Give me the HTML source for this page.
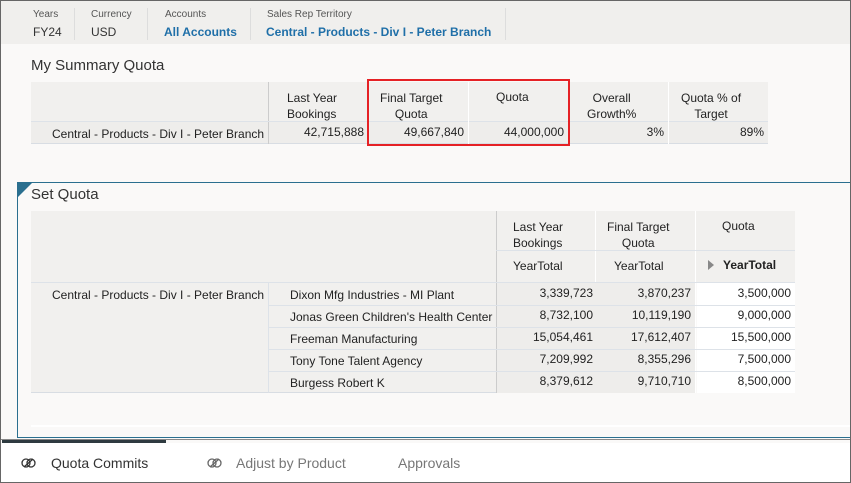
<!DOCTYPE html>
<html><head><style>
*{margin:0;padding:0;box-sizing:border-box}
body{width:851px;height:483px;overflow:hidden;font-family:"Liberation Sans",sans-serif;background:#faf9f8;position:relative;color:#222}
.a{position:absolute}
.frame{left:0;top:0;width:851px;height:483px;border:1px solid #666;z-index:9;pointer-events:none}
.lbl{font-size:10px;color:#555}
.val{font-size:12px;color:#333}
.blue{font-size:12px;font-weight:bold;color:#1f6fa8}
.c{font-size:12px;color:#222}
.num{text-align:right}
</style></head><body>
<div class="a frame"></div>
<div class="a" style="left:0;top:0;width:851px;height:44px;background:#f0efed"></div>
<div class="a lbl" style="left:33px;top:9px">Years</div>
<div class="a val" style="left:33px;top:25px">FY24</div>
<div class="a" style="left:74px;top:8px;width:1px;height:32px;background:#ddd"></div>
<div class="a lbl" style="left:91px;top:9px">Currency</div>
<div class="a val" style="left:91px;top:25px">USD</div>
<div class="a" style="left:147px;top:8px;width:1px;height:32px;background:#ddd"></div>
<div class="a lbl" style="left:165px;top:9px">Accounts</div>
<div class="a blue" style="left:164px;top:25px">All Accounts</div>
<div class="a" style="left:250px;top:8px;width:1px;height:32px;background:#ddd"></div>
<div class="a lbl" style="left:267px;top:9px">Sales Rep Territory</div>
<div class="a blue" style="left:266px;top:25px">Central - Products - Div I - Peter Branch</div>
<div class="a" style="left:505px;top:8px;width:1px;height:32px;background:#ddd"></div>

<div class="a" style="left:31px;top:57px;font-size:15px;color:#333">My Summary Quota</div>
<div class="a" style="left:31px;top:82px;width:737px;height:40px;background:#f1f0ee"></div>
<div class="a" style="left:31px;top:122px;width:737px;height:22px;background:#eeedeb;border-bottom:1px solid #d8dde3"></div>
<div class="a" style="left:268px;top:82px;width:1px;height:62px;background:#ccc"></div>
<div class="a" style="left:31px;top:121px;width:737px;height:1px;background:#dde2e8"></div>
<div class="a" style="left:468px;top:82px;width:1px;height:62px;background:#fff"></div>
<div class="a" style="left:568px;top:82px;width:1px;height:62px;background:#fff"></div>
<div class="a" style="left:668px;top:82px;width:1px;height:62px;background:#fff"></div>
<div class="a c" style="left:287px;top:90px;line-height:16px">Last Year<br>Bookings</div>
<div class="a c" style="left:380px;top:90px;line-height:16px;text-align:center">Final Target<br>Quota</div>
<div class="a c" style="left:496px;top:90px">Quota</div>
<div class="a c" style="left:587px;top:90px;line-height:16px;text-align:center">Overall<br>Growth%</div>
<div class="a c" style="left:681px;top:90px;line-height:16px;text-align:center">Quota % of<br>Target</div>
<div class="a c" style="left:52px;top:127px">Central - Products - Div I - Peter Branch</div>
<div class="a c num" style="left:268px;top:125px;width:96px">42,715,888</div>
<div class="a c num" style="left:368px;top:125px;width:96px">49,667,840</div>
<div class="a c num" style="left:468px;top:125px;width:96px">44,000,000</div>
<div class="a c num" style="left:568px;top:125px;width:96px">3%</div>
<div class="a c num" style="left:668px;top:125px;width:96px">89%</div>
<div class="a" style="left:367px;top:79px;width:203px;height:67px;border:2px solid #e52125"></div>

<div class="a" style="left:17px;top:182px;width:834px;height:256px;border:1px solid #2a6f8f;border-right:none"></div>
<svg class="a" style="left:17px;top:182px" width="18" height="18"><polygon points="0,0 16,0 0,16" fill="#2a6f8f"/></svg>
<div class="a" style="left:31px;top:186px;font-size:15px;color:#333">Set Quota</div>
<div class="a" style="left:31px;top:211px;width:764px;height:72px;background:#f1f0ee"></div>
<div class="a" style="left:31px;top:283px;width:237px;height:110px;background:#f1f0ee;border-bottom:1px solid #d8dde3"></div>
<div class="a" style="left:268px;top:283px;width:228px;height:110px;background:#f1f0ee;border-left:1px solid #dde2e8;border-bottom:1px solid #d8dde3"></div>
<div class="a" style="left:496px;top:211px;width:1px;height:182px;background:#ccc"></div>
<div class="a" style="left:595px;top:211px;width:1px;height:182px;background:#fff"></div>
<div class="a" style="left:695px;top:211px;width:1px;height:182px;background:#fff"></div>
<div class="a" style="left:496px;top:250px;width:299px;height:1px;background:#dde2e8"></div>
<div class="a" style="left:31px;top:282px;width:764px;height:1px;background:#dde2e8"></div>
<div class="a" style="left:497px;top:283px;width:198px;height:110px;background:#eeedeb"></div>
<div class="a" style="left:697px;top:283px;width:98px;height:110px;background:#fff"></div>
<div class="a" style="left:269px;top:305px;width:526px;height:1px;background:#dde2e8"></div>
<div class="a" style="left:269px;top:327px;width:526px;height:1px;background:#dde2e8"></div>
<div class="a" style="left:269px;top:349px;width:526px;height:1px;background:#dde2e8"></div>
<div class="a" style="left:269px;top:371px;width:526px;height:1px;background:#dde2e8"></div>
<div class="a c" style="left:513px;top:219px;line-height:16px">Last Year<br>Bookings</div>
<div class="a c" style="left:607px;top:219px;line-height:16px;text-align:center">Final Target<br>Quota</div>
<div class="a c" style="left:722px;top:219px">Quota</div>
<div class="a c" style="left:513px;top:259px">YearTotal</div>
<div class="a c" style="left:614px;top:259px">YearTotal</div>
<svg class="a" style="left:708px;top:260px" width="6" height="10"><polygon points="0,0 6,5 0,10" fill="#888"/></svg>
<div class="a c" style="left:723px;top:258px;font-weight:bold">YearTotal</div>
<div class="a c" style="left:52px;top:288px">Central - Products - Div I - Peter Branch</div>
<div class="a c" style="left:290px;top:284px;line-height:22px">Dixon Mfg Industries - MI Plant<br>Jonas Green Children's Health Center<br>Freeman Manufacturing<br>Tony Tone Talent Agency<br>Burgess Robert K</div>
<div class="a c num" style="left:497px;top:282px;width:96px;line-height:22px">3,339,723<br>8,732,100<br>15,054,461<br>7,209,992<br>8,379,612</div>
<div class="a c num" style="left:596px;top:282px;width:95px;line-height:22px">3,870,237<br>10,119,190<br>17,612,407<br>8,355,296<br>9,710,710</div>
<div class="a c num" style="left:696px;top:282px;width:95px;line-height:22px">3,500,000<br>9,000,000<br>15,500,000<br>7,500,000<br>8,500,000</div>
<div class="a" style="left:31px;top:425px;width:820px;height:2px;background:#fff"></div>

<div class="a" style="left:0;top:443px;width:851px;height:40px;background:#fff"></div>
<div class="a" style="left:0;top:439px;width:851px;height:1px;background:#888"></div>
<div class="a" style="left:2px;top:440px;width:164px;height:3px;background:#2e3a40"></div>
<svg class="a" style="left:21px;top:456px" width="16" height="14" fill="none" stroke="#333" stroke-width="1.3"><circle cx="5" cy="7" r="4"/><circle cx="10" cy="7" r="4"/><path d="M3 11 L12 3"/></svg>
<div class="a" style="left:51px;top:455px;font-size:14px;color:#333">Quota Commits</div>
<svg class="a" style="left:207px;top:456px" width="16" height="14" fill="none" stroke="#666" stroke-width="1.3"><circle cx="5" cy="7" r="4"/><circle cx="10" cy="7" r="4"/><path d="M3 11 L12 3"/></svg>
<div class="a" style="left:236px;top:455px;font-size:14px;color:#777">Adjust by Product</div>
<div class="a" style="left:398px;top:455px;font-size:14px;color:#777">Approvals</div>
</body></html>
